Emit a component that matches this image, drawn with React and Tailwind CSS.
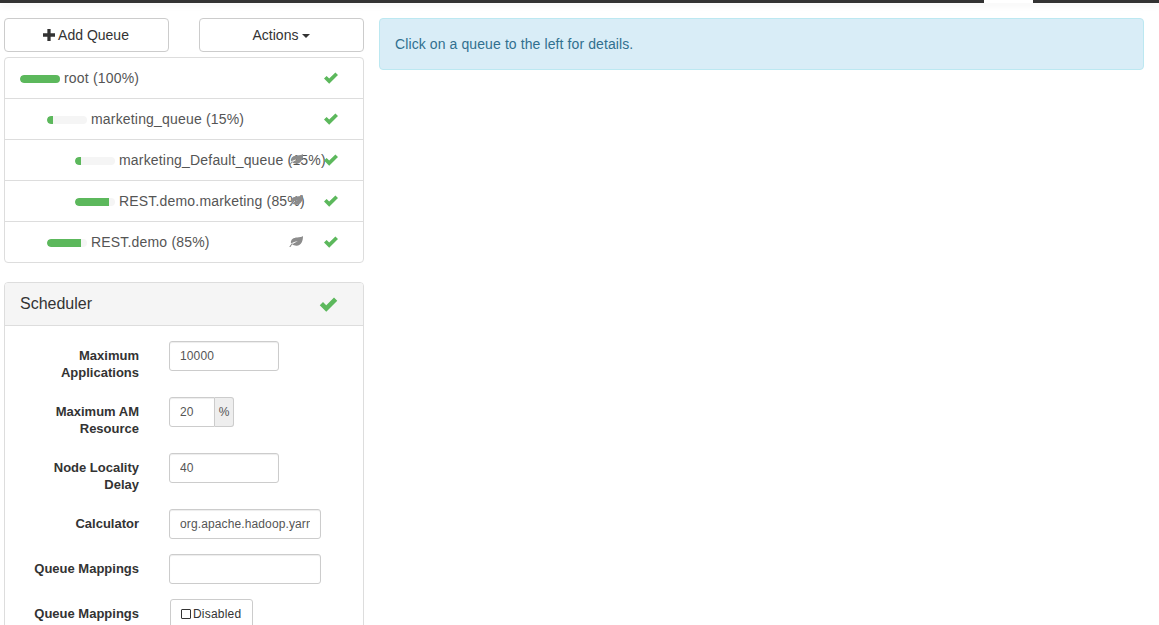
function Check({ w = 14, h = 12, className = "" }) {
  return (
    <svg width={w} height={h} viewBox="0 0 14 12" className={className}>
      <path d="M0 6.6 L2.6 4 L5.2 6.6 L11.4 0.4 L14 3 L5.2 11.8 Z" fill="#5cb85c" />
    </svg>
  );
}

function Leaf() {
  return (
    <svg width="14" height="11" viewBox="0 0 14 11" className="shrink-0">
      <path d="M2 7.4 C1.2 3.4 4.6 1.4 8.2 1.4 C10.6 1.4 12.6 1.1 14 0 C14 4.6 12.6 9.6 7.6 9.8 C5.8 9.9 4.4 9.3 3.4 8.6 C4.8 7 6.6 6 8.8 5.2 C6.4 5.6 3.8 6.2 2 7.4 Z" fill="#8c8c8c" />
      <path d="M0.2 10.8 C1 9.4 2 8.2 3.2 7.2 L3.9 8 C2.8 8.8 2 9.8 1.5 11 Z" fill="#8c8c8c" />
    </svg>
  );
}

function Row({ indent, pct, label, leaf, last }) {
  return (
    <div className={`flex items-center pr-[25px] ${last ? "h-[40px]" : "h-[41px] border-b border-[#ddd]"} ${indent}`}>
      <div className="mt-[1px] flex h-[8px] w-[40px] shrink-0 overflow-hidden rounded-[4px] bg-[#f5f5f5]">
        <div className="h-full rounded-l-[4px] bg-[#5cb85c]" style={{ width: `${pct}%` }} />
      </div>
      <span className="ml-[4px] w-0 grow whitespace-nowrap text-[14px] leading-[20px] tracking-[0.18px] text-[#555]">{label}</span>
      {leaf && <span className="relative z-10 mr-[21px] mt-[-1px] flex"><Leaf /></span>}
      <Check className="shrink-0" />
    </div>
  );
}

function Field({ label, children }) {
  return (
    <div className="mb-[15px] flex">
      <label className="w-[134px] shrink-0 pt-[6px] pb-[1px] text-right text-[13px] font-bold leading-[17px] text-[#333]">
        {label}
      </label>
      <div className="ml-[30px]">{children}</div>
    </div>
  );
}

const inputCls =
  "block h-[30px] rounded-[3px] border border-[#ccc] bg-white px-[10px] text-[12px] leading-[18px] tracking-[0.12px] text-[#555] shadow-[inset_0_1px_1px_rgba(0,0,0,0.075)] outline-none";

export default function App() {
  return (
    <div className="h-[625px] overflow-hidden bg-white font-['Liberation_Sans',Arial,sans-serif] text-[14px] text-[#333]">
      <div className="flex h-[3px] shadow-[0_3px_6px_rgba(0,0,0,0.06)]">
        <div className="w-[984px] bg-[#333]" />
        <div className="w-[49px] bg-white" />
        <div className="grow bg-[#333]" />
      </div>
      <div className="flex pl-[4px] pt-[15px]">
        <div className="w-[360px] shrink-0">
          <div className="flex justify-between">
            <button className="flex h-[34px] w-[165px] items-center justify-center rounded-[4px] border border-[#ccc] bg-white text-[14px] text-[#333]">
              <svg width="12" height="12" viewBox="0 0 11 11" className="mr-[3px]">
                <path d="M4 0 H7 V4 H11 V7 H7 V11 H4 V7 H0 V4 H4 Z" fill="#333" />
              </svg>
              <span className="pr-[1px]">Add Queue</span>
            </button>
            <button className="flex h-[34px] w-[165px] items-center justify-center rounded-[4px] border border-[#ccc] bg-white text-[14px] text-[#333]">
              Actions
              <span className="ml-[4px] mt-[1px] h-0 w-0 border-x-[4px] border-t-[4px] border-x-transparent border-t-[#333]" />
            </button>
          </div>
          <div className="mt-[5px] overflow-hidden rounded-[4px] border border-[#ddd]">
            <Row indent="pl-[15px]" pct={100} label="root (100%)" />
            <Row indent="pl-[42px]" pct={15} label="marketing_queue (15%)" />
            <Row indent="pl-[70px]" pct={15} label="marketing_Default_queue (15%)" leaf />
            <Row indent="pl-[70px]" pct={85} label="REST.demo.marketing (85%)" leaf />
            <Row indent="pl-[42px]" pct={85} label="REST.demo (85%)" leaf last />
          </div>
          <div className="mt-[19px] rounded-[4px] border border-[#ddd] bg-white">
            <div className="flex h-[43px] items-center justify-between rounded-t-[3px] border-b border-[#ddd] bg-[#f5f5f5] pl-[15px] pr-[25px]">
              <span className="text-[16px] text-[#333]">Scheduler</span>
              <Check w={19} h={15} />
            </div>
            <div className="pt-[15px]">
              <Field label={<>Maximum<br />Applications</>}>
                <input readOnly value="10000" className={`${inputCls} w-[110px]`} />
              </Field>
              <Field label={<>Maximum AM<br />Resource</>}>
                <div className="flex">
                  <input readOnly value="20" className={`${inputCls} w-[46px] rounded-r-none`} />
                  <span className="flex h-[30px] w-[19px] items-center justify-center rounded-r-[3px] border border-l-0 border-[#ccc] bg-[#eee] text-[12px] text-[#555]">%</span>
                </div>
              </Field>
              <Field label={<>Node Locality<br />Delay</>}>
                <input readOnly value="40" className={`${inputCls} w-[110px]`} />
              </Field>
              <Field label="Calculator">
                <input readOnly value="org.apache.hadoop.yarn.util.resource.DefaultResourceCalculator" className={`${inputCls} w-[152px]`} />
              </Field>
              <Field label="Queue Mappings">
                <input readOnly value="" className={`${inputCls} w-[152px]`} />
              </Field>
              <Field label="Queue Mappings">
                <button className="ml-[1px] flex h-[30px] items-center rounded-[3px] border border-[#ccc] bg-white pl-[10px] pr-[11px] text-[12px] tracking-[0.2px] text-[#333]">
                  <span className="mr-[2px] h-[10px] w-[10px] rounded-[1px] border border-[#333]" />
                  Disabled
                </button>
              </Field>
            </div>
          </div>
        </div>
        <div className="ml-[15px] w-[765px] shrink-0">
          <div className="h-[52px] rounded-[4px] border border-[#bce8f1] bg-[#d9edf7] p-[15px] text-[14px] leading-[20px] tracking-[0.1px] text-[#31708f]">
            Click on a queue to the left for details.
          </div>
        </div>
      </div>
    </div>
  );
}
